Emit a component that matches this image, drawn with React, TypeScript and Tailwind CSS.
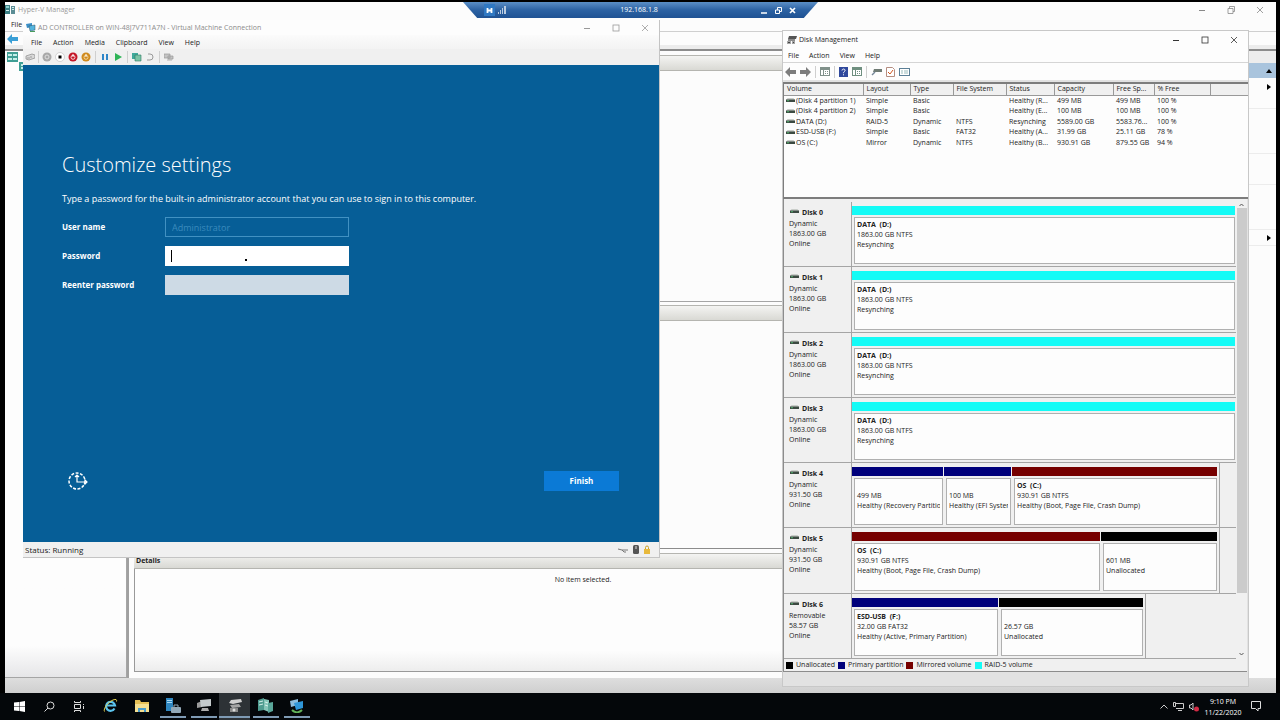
import React from "react";

// ── Data ───────────────────────────────────────────────────────────────────────

type VolumeKind = "unallocated" | "primary" | "mirror" | "raid";

const KIND_COLOR: Record<VolumeKind, string> = {
  unallocated: "bg-black",
  primary: "bg-[#00007b]",
  mirror: "bg-[#760000]",
  raid: "bg-[#14fbf6]",
};

const LEGEND: { kind: VolumeKind; label: string }[] = [
  { kind: "unallocated", label: "Unallocated" },
  { kind: "primary", label: "Primary partition" },
  { kind: "mirror", label: "Mirrored volume" },
  { kind: "raid", label: "RAID-5 volume" },
];

const COLUMNS = [
  { label: "Volume", width: "w-[79px]" },
  { label: "Layout", width: "w-[47px]" },
  { label: "Type", width: "w-[43px]" },
  { label: "File System", width: "w-[53px]" },
  { label: "Status", width: "w-[48px]" },
  { label: "Capacity", width: "w-[59px]" },
  { label: "Free Sp...", width: "w-[41px]" },
  { label: "% Free", width: "w-[56px]" },
];

const VOLUMES = [
  ["(Disk 4 partition 1)", "Simple", "Basic", "", "Healthy (R...", "499 MB", "499 MB", "100 %"],
  ["(Disk 4 partition 2)", "Simple", "Basic", "", "Healthy (E...", "100 MB", "100 MB", "100 %"],
  ["DATA (D:)", "RAID-5", "Dynamic", "NTFS", "Resynching", "5589.00 GB", "5583.76...", "100 %"],
  ["ESD-USB (F:)", "Simple", "Basic", "FAT32", "Healthy (A...", "31.99 GB", "25.11 GB", "78 %"],
  ["OS (C:)", "Mirror", "Dynamic", "NTFS", "Healthy (B...", "930.91 GB", "879.55 GB", "94 %"],
];

type Part = { kind: VolumeKind; width: string; name?: string; size: string; status: string };
type Disk = { name: string; type: string; size: string; parts: Part[] };

const RAID_PART: Part = {
  kind: "raid",
  width: "flex-1",
  name: "DATA  (D:)",
  size: "1863.00 GB NTFS",
  status: "Resynching",
};

const DISKS: Disk[] = [
  { name: "Disk 0", type: "Dynamic", size: "1863.00 GB", parts: [RAID_PART] },
  { name: "Disk 1", type: "Dynamic", size: "1863.00 GB", parts: [RAID_PART] },
  { name: "Disk 2", type: "Dynamic", size: "1863.00 GB", parts: [RAID_PART] },
  { name: "Disk 3", type: "Dynamic", size: "1863.00 GB", parts: [RAID_PART] },
  {
    name: "Disk 4",
    type: "Dynamic",
    size: "931.50 GB",
    parts: [
      { kind: "primary", width: "w-[91px]", size: "499 MB", status: "Healthy (Recovery Partition)" },
      { kind: "primary", width: "w-[67px]", size: "100 MB", status: "Healthy (EFI System)" },
      { kind: "mirror", width: "w-[205px]", name: "OS  (C:)", size: "930.91 GB NTFS", status: "Healthy (Boot, Page File, Crash Dump)" },
    ],
  },
  {
    name: "Disk 5",
    type: "Dynamic",
    size: "931.50 GB",
    parts: [
      { kind: "mirror", width: "w-[248px]", name: "OS  (C:)", size: "930.91 GB NTFS", status: "Healthy (Boot, Page File, Crash Dump)" },
      { kind: "unallocated", width: "w-[116px]", size: "601 MB", status: "Unallocated" },
    ],
  },
  {
    name: "Disk 6",
    type: "Removable",
    size: "58.57 GB",
    parts: [
      { kind: "primary", width: "w-[146px]", name: "ESD-USB  (F:)", size: "32.00 GB FAT32", status: "Healthy (Active, Primary Partition)" },
      { kind: "unallocated", width: "w-[144px]", size: "26.57 GB", status: "Unallocated" },
    ],
  },
];

// ── Small icons ────────────────────────────────────────────────────────────────

function DriveIcon() {
  return (
    <svg width="9" height="5" viewBox="0 0 9 5" className="shrink-0">
      <path d="M1.5 0h6L9 2H0z" fill="#c9cdc9" />
      <rect y="1.500" width="9" height="2.5" fill="#3c4a42" />
      <rect x="1" y="2.2" width="2" height="1" fill="#4fae6a" />
    </svg>
  );
}

function DiskMgmtIcon() {
  return (
    <svg width="10" height="10" viewBox="0 0 10 10">
      <path d="M2 1h8L9 4H1z" fill="#555" />
      <path d="M1 4h7v2H1z" fill="#8b8b8b" />
      <path d="M0 6h4v3H0zM5 6h3v3H5z" fill="#a5a5a5" />
      <path d="M1 7h2v1H1zM6 7h1v1H6z" fill="#444" />
    </svg>
  );
}

function ServersIcon() {
  return (
    <svg width="11" height="10" viewBox="0 0 11 10">
      <rect x="0" y="0" width="5" height="9" fill="#3b7f84" />
      <rect x="1" y="1" width="3" height="2" fill="#8fd0cf" />
      <rect x="6" y="1" width="4" height="8" fill="#5b8d94" />
      <path d="M7 2h2v1H7zM7 4h2v1H7zM1 5h3v1H1z" fill="#d4eeee" />
    </svg>
  );
}

function ComputerIcon() {
  return (
    <svg width="10" height="9" viewBox="0 0 10 9">
      <path d="M0 1l6-1v4L1 5z" fill="#3a8fc7" />
      <path d="M3 3l6-1v5L4 8z" fill="#54b4de" stroke="#356" strokeWidth=".5" />
      <path d="M4 8h5v1H4z" fill="#4a9c5c" />
    </svg>
  );
}

function ArrowIcon({ flip, color }: { flip?: boolean; color: string }) {
  return (
    <svg width="11" height="10" viewBox="0 0 11 10" className={flip ? "-scale-x-100" : ""}>
      <path d="M0 5l5-5v3h6v4H5v3z" fill={color} />
    </svg>
  );
}

function PaneIcon({ color }: { color: string }) {
  return (
    <svg width="10" height="9" viewBox="0 0 10 9">
      <rect x=".5" y=".5" width="9" height="8" fill="#fff" stroke={color} />
      <path d="M1 2h8" stroke={color} strokeWidth="2" />
      <path d="M3.500 3v5M5 4.500h1M7 4.500h1M5 6.500h1M7 6.500h1" stroke={color} />
    </svg>
  );
}

function Divider() {
  return <span className="h-3 w-px bg-[#cfcfcf]" />;
}

function SideArrow() {
  return (
    <svg width="4" height="6" viewBox="0 0 4 6">
      <path d="M0 0l4 3-4 3z" />
    </svg>
  );
}

// ── Window chrome ──────────────────────────────────────────────────────────────

function WindowButtons({ color, restore }: { color: string; restore?: boolean }) {
  return (
    <div className="ml-auto flex">
      <button aria-label="Minimize" className="flex w-[29px] items-center justify-center">
        <svg width="8" height="8" viewBox="0 0 8 8"><path d="M1 4.500h6" stroke={color} /></svg>
      </button>
      <button aria-label="Maximize" className="flex w-[29px] items-center justify-center">
        <svg width="8" height="8" viewBox="0 0 8 8" fill="none" stroke={color} strokeWidth=".8">
          {restore ? <path d="M1 2.500h5v5H1zM2.500 2.500v-2h5v5H6" /> : <rect x="1" y="1" width="6" height="6" />}
        </svg>
      </button>
      <button aria-label="Close" className="flex w-[29px] items-center justify-center">
        <svg width="8" height="8" viewBox="0 0 8 8"><path d="M1 1l6 6M7 1l-6 6" stroke={color} strokeWidth=".8" /></svg>
      </button>
    </div>
  );
}

function PanelHeader({ children }: { children?: React.ReactNode }) {
  return (
    <h2 className="h-4 border-y border-[#b5b5b0] bg-linear-to-b from-[#f4f4f2] to-[#d9d9d4] pl-[2px] font-bold leading-[14px]">
      {children}
    </h2>
  );
}

// ── Hyper-V Manager ────────────────────────────────────────────────────────────

function HyperVManager() {
  return (
    <section className="absolute inset-0 flex flex-col bg-[#fcfcfc]">
      <header className="flex h-4 shrink-0 items-center gap-[2px] text-[#999]">
        <ServersIcon />
        <h1>Hyper-V Manager</h1>
        <div className="ml-auto pr-[2px]">
          <WindowButtons color="#888" restore />
        </div>
      </header>
      <nav className="flex h-[13px] shrink-0 items-center pl-[6px]">
        <button>File</button>
      </nav>
      <div className="flex h-[14px] shrink-0 items-center border-t border-[#cfcfcf] pl-[2px]">
        <button aria-label="Back"><ArrowIcon color="#3a9fd6" /></button>
      </div>
      <div className="h-1 shrink-0 bg-[#ececec]" />

      <div className="flex min-h-0 flex-1 border-t-2 border-[#8c8c8c]">
        <div className="w-[122px] shrink-0 border-r border-b border-[#a5a5a5] bg-linear-to-b from-[#fdfdfd] from-95% to-[#e6e6e8]">
          <div className="flex items-start pt-[1px] pl-[2px]">
            <svg width="11" height="10" viewBox="0 0 11 10">
              <rect width="11" height="10" fill="#3f9e94" />
              <path d="M1 2h4v2H1zM6 2h4v2H6zM1 6h4v2H1zM6 6h4v2H6z" fill="#c4efe9" />
            </svg>
          </div>
          <svg width="8" height="10" viewBox="0 0 8 10" className="ml-[14px]">
            <rect width="8" height="9" fill="#3f9e94" />
            <path d="M2 2h5v2H2zM2 5h5v2H2z" fill="#c4efe9" />
          </svg>
        </div>
        <div className="mr-[5px] w-[2px] shrink-0 bg-[#a0a0a0]" />
        <div className="flex min-w-0 flex-1 flex-col pt-1 pb-[6px]">
          <PanelHeader />
          <div className="h-[231px] border-b border-[#a5a5a5]" />
          <div className="h-[3px]" />
          <PanelHeader />
          <div className="h-[228px] border-b border-[#8c8c8c]" />
          <div className="h-[4px]" />
          <PanelHeader>Details</PanelHeader>
          <div className="flex-1 border-b border-l border-[#999] bg-linear-to-b from-[#fdfdfd] from-80% to-[#ededed] pt-[6px]">
            <p className="w-[896px] text-center">No item selected.</p>
          </div>
        </div>
        <aside className="w-[27px] shrink-0 border-t-[12px] border-[#ededed]">
          <div className="flex h-[15px] items-center justify-end bg-[#a9c4dd] pr-1">
            <svg width="6" height="4" viewBox="0 0 6 4"><path d="M0 4l3-4 3 4z" /></svg>
          </div>
          <div className="flex h-[31px] justify-end border-b border-[#ececec] pt-[6px] pr-[5px]">
            <SideArrow />
          </div>
          <div className="h-[45px] border-b border-[#ececec]" />
          <div className="h-[31px] border-b border-[#ececec]" />
          <div className="h-[45px] border-b border-[#ececec]" />
          <div className="flex h-4 items-center justify-end border-b border-[#ececec] pr-[5px]">
            <SideArrow />
          </div>
        </aside>
      </div>
      <footer className="h-[15px] shrink-0 bg-linear-to-b from-[#dedede] to-[#cfcfcf]" />
    </section>
  );
}

// ── Remote desktop bar ─────────────────────────────────────────────────────────

function RemoteBar() {
  return (
    <div className="absolute top-0 left-[458px] flex h-4 w-[355px] items-center bg-linear-to-b from-[#5b8fc6] via-[#2c62a3] to-[#1f5293] text-white [clip-path:polygon(0_0,100%_0,96%_100%,4%_100%)]">
      <button aria-label="Pin" className="ml-[21px] flex h-3 w-[11px] items-center justify-center bg-[#2f78c2]">
        <svg width="7" height="7" viewBox="0 0 7 7"><path d="M1.500 1v5M5.500 1v5M1 3.500h5" stroke="#fff" strokeWidth="1.800" /></svg>
      </button>
      <svg width="8" height="8" viewBox="0 0 8 8" className="ml-[3px]">
        <path d="M0 6h1v2H0zM2 4h1v4H2zM4 2h1v6H4zM6 0h2v8H6z" fill="#b9cbe0" />
      </svg>
      <span className="flex-1 pl-[12px] text-center">192.168.1.8</span>
      <div className="mr-[21px] flex gap-[5px]">
        <button aria-label="Minimize" className="px-[1px]"><svg width="7" height="7" viewBox="0 0 7 7"><path d="M0 6h6" stroke="#fff" strokeWidth="1.500" /></svg></button>
        <button aria-label="Restore" className="px-[1px]">
          <svg width="7" height="7" viewBox="0 0 7 7" fill="none" stroke="#fff"><path d="M.5 3h4v3.500h-4zM2.500 3V.500h4v4h-2" /></svg>
        </button>
        <button aria-label="Close" className="px-[1px]"><svg width="7" height="7" viewBox="0 0 7 7"><path d="M1 1l5 5M6 1L1 6" stroke="#fff" strokeWidth="1.700" /></svg></button>
      </div>
    </div>
  );
}

// ── Virtual Machine Connection ─────────────────────────────────────────────────

const FIELD = "h-5 w-full rounded-none px-[6px] text-[9px] outline-none";

function VmToolbar() {
  return (
    <div className="flex h-4 shrink-0 items-center gap-[3px] bg-[#f0f0f0] pl-[2px]">
      <svg width="10" height="8" viewBox="0 0 10 8"><path d="M1 3l6-2 3 1v3L4 7 1 6zM2 5h3M6 3v2" fill="#d8d8d8" stroke="#888" strokeWidth=".7" /></svg>
      <Divider />
      <svg width="10" height="10" viewBox="0 0 10 10"><circle cx="5" cy="5" r="4.500" fill="#a8a8a8" /><circle cx="5" cy="5" r="2" fill="none" stroke="#ddd" /></svg>
      <svg width="10" height="10" viewBox="0 0 10 10"><circle cx="5" cy="5" r="4.500" fill="#fff" stroke="#bbb" strokeWidth=".6" /><rect x="3.500" y="3.500" width="3" height="3" /></svg>
      <svg width="10" height="10" viewBox="0 0 10 10"><circle cx="5" cy="5" r="4.500" fill="#c41627" /><circle cx="5" cy="5.300" r="2" fill="none" stroke="#fff" strokeWidth=".8" /><path d="M5 2v3" stroke="#fff" /></svg>
      <svg width="10" height="10" viewBox="0 0 10 10" className="mr-[1px]"><circle cx="5" cy="5" r="4.500" fill="#d08a1d" /><circle cx="5" cy="5.300" r="2" fill="none" stroke="#fbe3b5" strokeWidth=".8" /><path d="M5 2v3" stroke="#fff" /></svg>
      <Divider />
      <svg width="10" height="8" viewBox="0 0 10 8" className="ml-[1px]"><path d="M2 1h2v6H2zM6 1h2v6H6z" fill="#2f86c9" /></svg>
      <svg width="10" height="8" viewBox="0 0 10 8" className="mr-[1px]"><path d="M2 0l7 4-7 4z" fill="#2fb457" /></svg>
      <Divider />
      <svg width="10" height="10" viewBox="0 0 10 10" className="ml-[1px]"><path d="M0 1h6v6H0z" fill="#41a99b" /><path d="M3 3h6v6H3z" fill="#7cc4a6" stroke="#2a7a63" strokeWidth=".6" /></svg>
      <svg width="10" height="8" viewBox="0 0 10 8" className="mr-[1px]"><path d="M3 1h2a2.500 2.500 0 010 6H2" fill="none" stroke="#999" /></svg>
      <Divider />
      <svg width="10" height="9" viewBox="0 0 10 9" className="ml-[1px]"><path d="M0 1h6v4H0zM4 3h5v3H4zM3 7h5" fill="#c4c4c4" stroke="#999" strokeWidth=".7" /></svg>
    </div>
  );
}

function VmConnection() {
  return (
    <section className="absolute top-[18px] left-[18px] flex h-[538px] w-[637px] flex-col border-r border-b border-[#c4c4c4] bg-[#fdfdfd]">
      <header className="flex h-[15px] shrink-0 items-center gap-[2px] pl-[3px] text-[#8c8c8c]">
        <ComputerIcon />
        <h1>AD CONTROLLER on WIN-48J7V711A7N - Virtual Machine Connection</h1>
        <WindowButtons color="#999" />
      </header>
      <nav className="flex h-[14px] shrink-0 items-center gap-[11px] bg-linear-to-b from-[#fbfbfb] to-[#f3f3f3] pt-[1px] pl-2">
        {["File", "Action", "Media", "Clipboard", "View", "Help"].map((m) => (
          <button key={m}>{m}</button>
        ))}
      </nav>
      <VmToolbar />

      <main className="flex flex-1 flex-col bg-[#065e97] pr-10 pl-[39px] text-[8px] text-white">
        <h2 className="mt-[84px] text-[20px] font-light leading-8">Customize settings</h2>
        <p className="mt-[11px] text-[9px] leading-[14px]">
          Type a password for the built-in administrator account that you can use to sign in to this computer.
        </p>
        <form className="mt-[11px] grid grid-cols-[103px_184px] items-center gap-y-[9px] font-bold">
          <label htmlFor="user">User name</label>
          <input id="user" disabled defaultValue="Administrator" className={`${FIELD} border border-[#4191c2] font-normal text-[#3b8bbd]`} />
          <label htmlFor="pw">Password</label>
          <div className="relative">
            <input id="pw" type="password" className={`${FIELD} bg-white text-black`} />
            <span className="absolute top-1 left-[6px] h-3 w-px bg-black" />
            <span className="absolute top-[13px] left-[80px] size-[2px] bg-black" />
          </div>
          <label htmlFor="pw2">Reenter password</label>
          <input id="pw2" type="password" className={`${FIELD} bg-[#cddae5]`} />
        </form>
        <div className="mt-auto mb-[50px] flex items-center justify-between">
          <svg width="22" height="22" viewBox="0 0 22 22" fill="none" stroke="#fff" className="ml-1">
            <circle cx="11" cy="11" r="8" strokeWidth="1.500" strokeDasharray="3 1.500" />
            <path d="M11 5v7h10M18.500 9.500l2.500 2.500-2.500 2.500M9 7l2-2 2 2" strokeWidth="1.200" />
          </svg>
          <button className="h-5 w-[75px] bg-[#0b7ad6] font-bold">Finish</button>
        </div>
      </main>

      <footer className="flex h-[15px] shrink-0 items-center gap-1 bg-[#f0f0f0] pr-2 pl-[2px]">
        <span className="text-[8px]">Status: Running</span>
        <svg width="11" height="6" viewBox="0 0 11 6" className="ml-auto"><path d="M0 2l4 1h6M4 3l2 2h2" fill="none" stroke="#777" /></svg>
        <svg width="6" height="9" viewBox="0 0 6 9"><rect width="6" height="9" rx="1.500" fill="#555" /><path d="M3 1v3" stroke="#ddd" /></svg>
        <svg width="8" height="9" viewBox="0 0 8 9"><path d="M2.500 4V2.500a1.500 1.500 0 013 0V4" fill="none" stroke="#c9a227" /><rect x="1" y="4" width="6" height="5" fill="#e8b93c" /></svg>
      </footer>
    </section>
  );
}

// ── Disk Management ────────────────────────────────────────────────────────────

function VolumeTable() {
  return (
    <div className="h-[117px] shrink-0 border-t-2 border-b-2 border-l border-[#7d7d7d] bg-[#fdfdfd]">
      <table className="h-[64px] w-full table-fixed border-collapse text-left">
        <thead>
          <tr className="h-[11px] border-b border-[#999] bg-[#f0f0f0]">
            {COLUMNS.map((c) => (
              <th key={c.label} className={`${c.width} border-r border-[#999] p-0 pl-[3px] font-normal leading-[10px]`}>
                {c.label}
              </th>
            ))}
            <th className="p-0" />
          </tr>
        </thead>
        <tbody>
          {VOLUMES.map((row) => (
            <tr key={row[0]}>
              {row.map((cell, i) => (
                <td key={i} className="p-0 pl-[3px] leading-[10px] whitespace-nowrap first:pl-[2px]">
                  {i === 0 ? (
                    <span className="flex items-center gap-[1px]">
                      <DriveIcon />
                      {cell}
                    </span>
                  ) : (
                    cell
                  )}
                </td>
              ))}
            </tr>
          ))}
        </tbody>
      </table>
    </div>
  );
}

function DiskPart({ part }: { part: Part }) {
  return (
    <div className={`${part.width} flex min-w-0 flex-col`}>
      <div className={`h-[9px] shrink-0 ${KIND_COLOR[part.kind]}`} />
      <div className="mt-[2px] ml-[2px] flex-1 overflow-hidden border border-[#b0b0b0] bg-[#fdfdfd] px-[2px] pt-[2px]">
        <p className="h-[10px] font-bold whitespace-pre">{part.name}</p>
        <p>{part.size}</p>
        <p className="overflow-hidden whitespace-nowrap">{part.status}</p>
      </div>
    </div>
  );
}

function DiskRow({ disk }: { disk: Disk }) {
  const raid = disk.parts[0].kind === "raid";
  return (
    <div className="flex border-b border-[#a5a5a5] leading-[10px]">
      <div className="w-[68px] shrink-0 border-r border-[#a5a5a5] pt-[6px] pl-[5px]">
        <p className="mb-[1px] flex gap-[3px] pl-[1px] font-bold">
          <span className="pt-[1px]"><DriveIcon /></span>
          {disk.name}
        </p>
        <p>{disk.type}</p>
        <p>{disk.size}</p>
        <p>Online</p>
      </div>
      <div className={`flex gap-[1px] border-[#a5a5a5] pt-[4px] pb-[2px] ${raid ? "flex-1 pr-[1px]" : "border-r pr-[2px]"}`}>
        {disk.parts.map((p, i) => (
          <DiskPart key={i} part={p} />
        ))}
      </div>
    </div>
  );
}

function DiskManagement() {
  return (
    <section className="absolute top-[28px] right-[27px] flex h-[657px] w-[467px] flex-col border border-[#c8c8c8] bg-[#e2e2e2]">
      <header className="flex h-[18px] shrink-0 items-center gap-[2px] bg-[#fdfdfd] pb-[1px] pl-1">
        <DiskMgmtIcon />
        <h1>Disk Management</h1>
        <WindowButtons color="#333" />
      </header>
      <nav className="flex h-[14px] shrink-0 items-center gap-[10px] border-b border-[#d5d5d5] bg-[#fdfdfd] pt-[1px] pl-[5px]">
        {["File", "Action", "View", "Help"].map((m) => (
          <button key={m}>{m}</button>
        ))}
      </nav>
      <div className="mb-[2px] flex h-[17px] shrink-0 items-center gap-1 bg-[#fdfdfd] pl-[2px]">
        <button aria-label="Back"><ArrowIcon color="#7d7d7d" /></button>
        <button aria-label="Forward"><ArrowIcon flip color="#7d7d7d" /></button>
        <Divider />
        <PaneIcon color="#80908a" />
        <Divider />
        <svg width="9" height="10" viewBox="0 0 9 10">
          <rect width="9" height="10" fill="#2f489c" />
          <path d="M3 3.500C3 1.500 6.500 1.500 6 3.800 5.500 4.800 4.500 4.800 4.500 6.200M4.500 7.300v1" stroke="#fff" fill="none" />
        </svg>
        <PaneIcon color="#6f8f80" />
        <Divider />
        <svg width="11" height="8" viewBox="0 0 11 8"><path d="M3 1h8v3H2z" fill="#6f7b74" /><path d="M1 7l3-3" stroke="#789" strokeWidth="1.500" /></svg>
        <svg width="9" height="10" viewBox="0 0 9 10"><path d="M.5.500h6l2 2v7h-8z" fill="#fff" stroke="#b58d80" /><path d="M2 5l2 2 3-4" fill="none" stroke="#d2561f" /></svg>
        <svg width="11" height="8" viewBox="0 0 11 8"><rect x=".5" y=".5" width="10" height="7" fill="#fff" stroke="#5b7f96" /><path d="M2 3h2M5 3h4M2 5h2M5 5h4" stroke="#9bb" /></svg>
      </div>

      <VolumeTable />

      <div className="mr-[1px] border-b border-l border-[#8c8c8c] bg-[#f0f0f0]">
        <div className="flex h-[460px]">
          <div className="grid flex-1 grid-rows-7 pt-[3px]">
            {DISKS.map((d) => (
              <DiskRow key={d.name} disk={d} />
            ))}
          </div>
          <div className="flex w-[11px] flex-col items-center">
            <svg width="5" height="9" viewBox="0 0 5 9"><path d="M.5 7l2-2 2 2" fill="none" stroke="#555" /></svg>
            <div className="h-[385px] w-[10px] bg-[#cbcbcb]" />
            <svg width="5" height="7" viewBox="0 0 5 7" className="mt-auto"><path d="M.5 1l2 2 2-2" fill="none" stroke="#555" /></svg>
          </div>
        </div>
        <ul className="flex h-3 items-center gap-[3px] pl-[2px]">
          {LEGEND.map((l) => (
            <li key={l.label} className="flex items-center gap-[3px]">
              <span className={`size-[7px] ${KIND_COLOR[l.kind]}`} />
              {l.label}
            </li>
          ))}
        </ul>
      </div>
    </section>
  );
}

// ── Taskbar ────────────────────────────────────────────────────────────────────

const APPS = [
  {
    label: "Internet Explorer",
    open: false,
    icon: (
      <svg width="15" height="15" viewBox="0 0 15 15" fill="none">
        <path d="M11.500 10.500A4.500 4.500 0 1112 7.500H4" stroke="#5cc4ee" strokeWidth="2.200" />
        <path d="M1.500 13.500C0 11 5 4 10 2c3-1.200 4-.500 3.500 1.500" stroke="#e8d44f" />
      </svg>
    ),
  },
  {
    label: "File Explorer",
    open: false,
    icon: (
      <svg width="14" height="12" viewBox="0 0 14 12">
        <path d="M0 0h5l1 2h8v10H0z" fill="#e5bf56" />
        <path d="M0 4h14v8H0z" fill="#f5df91" />
        <path d="M3 8h8v4H9v-2H5v2H3z" fill="#4a9ccb" />
      </svg>
    ),
  },
  {
    label: "Server Manager",
    open: true,
    icon: (
      <svg width="16" height="15" viewBox="0 0 16 15">
        <rect x="1" width="7" height="13" fill="#2f86c0" />
        <path d="M2 2h5v1H2zM2 4h5v1H2z" fill="#a9d9f2" />
        <rect x="6" y="9" width="10" height="6" rx="1" fill="#93a9b8" />
        <path d="M9 9V7h4v2" fill="none" stroke="#93a9b8" />
      </svg>
    ),
  },
  {
    label: "Computer Management",
    open: true,
    icon: (
      <svg width="14" height="13" viewBox="0 0 14 13">
        <path d="M0 4l5-2v6l-5 1z" fill="#9a9a9a" />
        <path d="M3 1l11-1v7L4 8z" fill="#c5cbcd" />
        <path d="M5 9h6l1 3H4z" fill="#adadad" />
      </svg>
    ),
  },
  {
    label: "Disk Management",
    open: true,
    active: true,
    icon: (
      <svg width="14" height="14" viewBox="0 0 14 14">
        <path d="M3 1l10-1 1 3-9 2-4-1z" fill="#d0d0d0" />
        <path d="M2 6l9-1 2 3-9 1z" fill="#a5a5a5" />
        <path d="M2 9h8v4H2z" fill="#8a8a8a" />
        <circle cx="6" cy="11" r="1.500" fill="#ddd" />
      </svg>
    ),
  },
  {
    label: "Hyper-V Manager",
    open: true,
    icon: (
      <svg width="15" height="15" viewBox="0 0 15 15">
        <path d="M0 2l6-2v12l-6 1z" fill="#4f9c90" />
        <path d="M6 1l5 1v12l-5-2z" fill="#86c6b9" />
        <path d="M10 5l5-1v9l-5 2z" fill="#5aa79a" />
        <path d="M1 4l4-1M1 7l4-1M7 4l3 1M7 7l3 1" stroke="#d3f0ea" />
      </svg>
    ),
  },
  {
    label: "Virtual Machine Connection",
    open: true,
    icon: (
      <svg width="14" height="14" viewBox="0 0 14 14">
        <path d="M0 2l8-2v6L1 8z" fill="#8cbcdc" />
        <path d="M4 4l9-2v7L6 11z" fill="#2f96d8" />
        <path d="M2 11c3 3 7 3 10 0" fill="none" stroke="#62b359" strokeWidth="2" />
      </svg>
    ),
  },
];

const SYSTEM_BUTTON = "flex w-[30px] items-center justify-center";

function Taskbar() {
  return (
    <footer className="flex h-[27px] shrink-0 bg-[#04070a] pl-1 text-white">
      <button aria-label="Start" className={SYSTEM_BUTTON}>
        <svg width="11" height="11" viewBox="0 0 11 11"><path d="M0 1.500L5 1v4H0zM5.500 1L11 0v5H5.500zM0 5.500h5V10l-5-.500zM5.500 5.500H11V11l-5.500-1z" fill="#fff" /></svg>
      </button>
      <button aria-label="Search" className={SYSTEM_BUTTON}>
        <svg width="11" height="11" viewBox="0 0 11 11" fill="none" stroke="#ddd"><circle cx="6.500" cy="4.500" r="3.500" /><path d="M4 7L.5 10.500" /></svg>
      </button>
      <button aria-label="Task View" className={SYSTEM_BUTTON}>
        <svg width="11" height="11" viewBox="0 0 11 11" fill="none" stroke="#ddd"><path d="M.5 0v1.500h6V0M.5 3.500h6v4h-6zM.5 11V9.500h6V11M9.500 3v1M9.500 5v3" /></svg>
      </button>
      <div className="ml-[1px] flex">
        {APPS.map((a) => (
          <button
            key={a.label}
            aria-label={a.label}
            className={`flex w-[31px] flex-col items-center ${a.active ? "bg-[#2d3236]" : ""}`}
          >
            <span className="flex flex-1 items-center pt-[2px]">{a.icon}</span>
            <span className={`mb-[2px] h-[2px] ${a.open ? "bg-[#7f9bb5]" : ""} ${a.active ? "w-full" : "w-[26px]"}`} />
          </button>
        ))}
      </div>
      <div className="ml-auto flex items-center gap-[5px] pr-[19px]">
        <svg width="8" height="5" viewBox="0 0 8 5"><path d="M.5 4.500L4 1l3.500 3.500" fill="none" stroke="#ccc" /></svg>
        <svg width="11" height="9" viewBox="0 0 11 9" fill="none" stroke="#ccc"><path d="M3 1.500h7.500v5H3M.5.500h2v4h-2zM5 8.500h4" /></svg>
        <svg width="10" height="10" viewBox="0 0 10 10"><path d="M.5 3h1.500l2-2v7l-2-2H.500z" fill="none" stroke="#ccc" /><circle cx="7.500" cy="7" r="2.500" fill="#d22b45" /></svg>
        <div className="w-[38px] text-center leading-[11px]">
          <p>9:10 PM</p>
          <p>11/22/2020</p>
        </div>
        <svg width="10" height="11" viewBox="0 0 10 11" fill="none" stroke="#ddd" className="ml-1"><path d="M.5.500h9v7H7v2.500L4.500 7.500h-4z" /></svg>
      </div>
    </footer>
  );
}

// ── Main export ────────────────────────────────────────────────────────────────

export default function App() {
  return (
    <div className="flex h-screen flex-col overflow-hidden bg-black pt-[2px] font-['Open_Sans',sans-serif] text-[7px] leading-[10px] text-[#222]">
      <div className="relative mr-1 ml-[5px] flex-1">
        <HyperVManager />
        <VmConnection />
        <RemoteBar />
        <DiskManagement />
      </div>
      <Taskbar />
    </div>
  );
}
